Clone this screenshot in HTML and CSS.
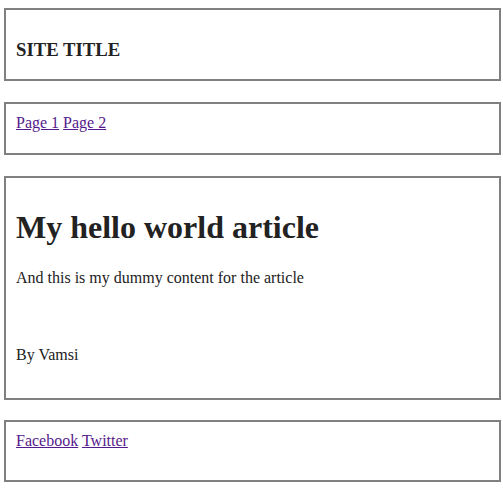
FILE: index.html
```html
<!DOCTYPE html>
<html lang="en">
<head>
    <meta charset="UTF-8">
    <meta name="viewport" content="width=device-width, initial-scale=1.0">
    <title>Hello World</title>
    <link rel="stylesheet" href="styles.css">
</head>
<body>
    <header class="box site-header">
        <h3>SITE TITLE</h3>
    </header>

    <nav class="box site-nav">
        <a href="#">Page 1</a>
        <a href="#">Page 2</a>
    </nav>

    <article class="box article">
        <h1>My hello world article</h1>
        <p>And this is my dummy content for the article</p>
        <p class="byline">By Vamsi</p>
    </article>

    <footer class="box site-footer">
        <a href="#">Facebook</a>
        <a href="#">Twitter</a>
    </footer>
</body>
</html>
```

FILE: styles.css
```css
body {
    font-family: "Liberation Serif", "Times New Roman", serif;
    font-size: 16px;
    line-height: 18px;
    color: #222;
    background-color: #fff;
    margin: 8px 2px 8px 4px;
}

a {
    color: #551a8b;
}

.box {
    border: 2px solid #808080;
    padding: 10px;
    margin-bottom: 21px;
}

.site-header {
    padding-bottom: 0;
}

    .site-header h3 {
        font-size: 18.72px;
        line-height: 21px;
        margin: 19px 0;
    }

.site-nav {
    padding-bottom: 21px;
}

.article {
    margin-bottom: 20px;
}

    .article h1 {
        font-size: 32px;
        line-height: 37px;
        margin: 21px 0 23px;
    }

    .article p {
        margin: 21px 0;
    }

    .article .byline {
        margin-top: 59px;
        margin-bottom: 24px;
    }

.site-footer {
    padding-bottom: 30px;
    margin-bottom: 0;
}
```
